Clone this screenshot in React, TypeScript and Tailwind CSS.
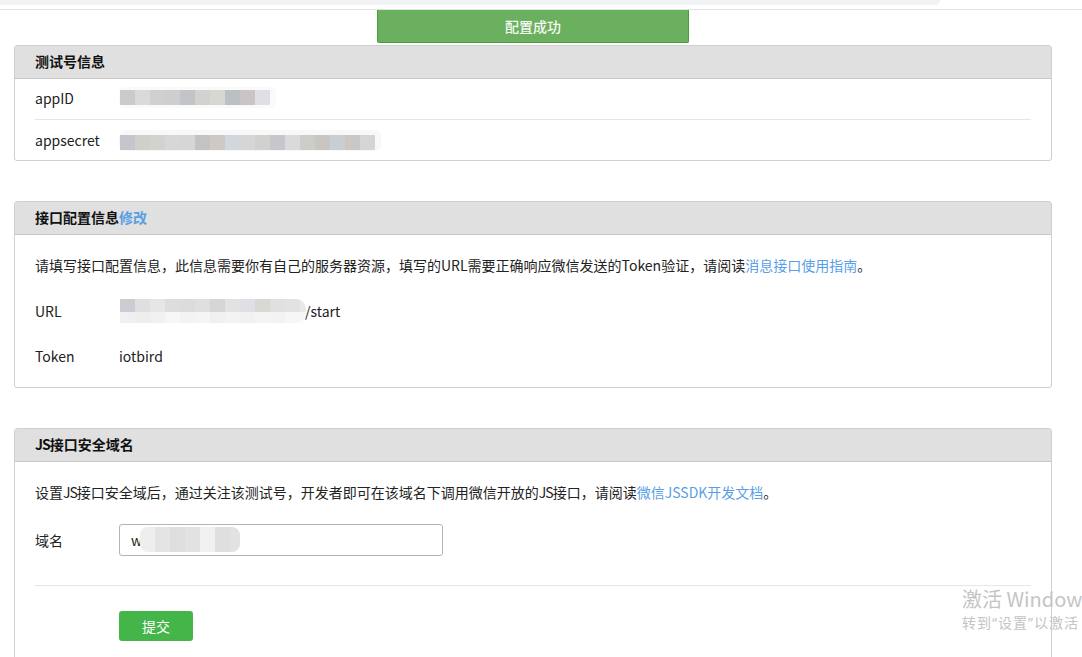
const appIdCells = ["#cbcbcb", "#dadada", "#cfd1d1", "#cfcdcd", "#c1c5c8", "#d2d2cf", "#d7d8d2", "#bcc0c3", "#c9c5c4", "#e0e0e4"];
const secretCells = ["#c5c6cb", "#d0cfca", "#d3d2d0", "#d7d7d7", "#d6d6d6", "#c4c2c2", "#cdc9c5", "#d3d6dc", "#d6d6d6", "#d0d2cd", "#c8c6cc", "#dadada", "#cbcdc6", "#c9c5c2", "#c8ced1", "#cac7c5", "#d5d5d5"];
const urlTop = ["#cdcbd1", "#dfdfdf", "#e6e6e6", "#dedddd", "#dcdcdc", "#dfdfdf", "#d8d6d4", "#e2e2e4", "#dfe0e6", "#dad8d4", "#e0e0e0", "#e2e2e2", "#e8e8e8"];
const urlBottom = ["#f0f0f0", "#eeeeee", "#f1f1f1", "#f7f7f7", "#f3f3f3", "#f5f5f5", "#f0f0f0", "#f3f3f3", "#f1f1f1", "#f4f4f4", "#f3f3f3", "#f6f6f6", "#f6f6f6"];
const domainCells = ["#eeeeee", "#e4e4e4", "#dedede", "#e4e2e0", "#f0f0f0", "#dfdfdf", "#e2e2e2"];

function Cells({ colors, height }: { colors: string[]; height: number }) {
  return (
    <div className="flex">
      {colors.map((c, i) => (
        <div key={i} className="w-[15px] shrink-0" style={{ backgroundColor: c, height }} />
      ))}
    </div>
  );
}

function Panel({ title, children }: { title: React.ReactNode; children: React.ReactNode }) {
  return (
    <section className="rounded-[3px] border border-[#d0d0d0] bg-white">
      <h3 className="flex h-[33px] items-center border-b border-[#c8c8c8] bg-[#e0e0e0] px-5 pb-[2px] text-sm font-bold text-[#111111]">
        {title}
      </h3>
      {children}
    </section>
  );
}

function Field({ label, children }: { label: string; children: React.ReactNode }) {
  return (
    <div className="flex items-center">
      <div className="w-[84px] shrink-0">{label}</div>
      {children}
    </div>
  );
}

export default function App() {
  return (
    <div className="relative h-[657px] w-[1082px] overflow-hidden bg-white font-['Noto_Sans_CJK_SC','Noto_Sans',sans-serif] text-sm text-[#222222]">
      <div className="h-[10px] border-b border-[#e2e2e2]">
        <div className="h-[5px] w-[940px] rounded-br-lg bg-[#f1f2f4]" />
      </div>

      <div className="ml-[14px] w-[1038px]">
        <div className="mx-auto flex h-[33px] w-[312px] items-center justify-center rounded-b-[2px] border-x border-b border-[#4d9a41] bg-[#6bb05f] text-sm font-medium text-[#f4f9f2]">
          配置成功
        </div>

        <div className="mt-[2px]">
          <Panel title="测试号信息">
            <div className="px-5">
              <div className="flex h-[41px] items-center border-b border-[#e6e6e6] pb-[3px]">
                <Field label="appID">
                  <div className="mt-[-1px] rounded-[6px] bg-[#fafafa] py-[3px] pr-[6px]">
                    <div className="ml-px">
                      <Cells colors={appIdCells} height={15} />
                    </div>
                  </div>
                </Field>
              </div>
              <div className="flex h-10 items-center">
                <Field label="appsecret">
                  <div className="rounded-[6px] bg-[#f8f8f8] py-[1px] pr-[6px]">
                    <div className="ml-px mt-[4px]">
                      <Cells colors={secretCells} height={15} />
                    </div>
                  </div>
                </Field>
              </div>
            </div>
          </Panel>
        </div>

        <div className="mt-10">
          <Panel
            title={
              <>
                接口配置信息<a className="text-[#5a9fe6]">修改</a>
              </>
            }
          >
            <div className="flex flex-col gap-6 px-5 pt-5 pb-[21px]">
              <p className="h-5 leading-5">
                请填写接口配置信息，此信息需要你有自己的服务器资源，填写的URL需要正确响应微信发送的Token验证，请阅读
                <a className="text-[#5a9fe6]">消息接口使用指南</a>。
              </p>
              <Field label="URL">
                <div className="ml-px w-[186px] overflow-hidden rounded-r-[10px]">
                  <Cells colors={urlTop} height={13} />
                  <Cells colors={urlBottom} height={11} />
                </div>
                <span className="ml-[-1px]">/start</span>
              </Field>
              <div className="mt-[-1px]">
                <Field label="Token">
                  <span>iotbird</span>
                </Field>
              </div>
            </div>
          </Panel>
        </div>

        <div className="mt-10">
          <Panel
            title={
              <>
                <span className="tracking-[-1px]">JS</span>接口安全域名
              </>
            }
          >
            <div className="px-5 pt-5 pb-10">
              <p className="h-5 leading-5">
                设置<span className="tracking-[-1px]">JS</span>接口安全域后，通过关注该测试号，开发者即可在该域名下调用微信开放的
                <span className="tracking-[-1px]">JS</span>接口，请阅读
                <a className="text-[#5a9fe6]">微信JSSDK开发文档</a>。
              </p>
              <div className="mt-[22px]">
                <Field label="域名">
                  <div className="relative">
                    <input
                      readOnly
                      value="w"
                      className="h-[32px] w-[324px] rounded-[3px] border border-[#b4b4b4] px-[11px] text-sm text-[#222222] outline-none"
                    />
                    <div className="absolute top-[3px] left-[21px] w-[100px] overflow-hidden rounded-[8px]">
                      <Cells colors={domainCells} height={25} />
                    </div>
                  </div>
                </Field>
              </div>
              <div className="mt-[29px] border-t border-[#e6e6e6] pt-[25px] pl-[84px]">
                <button className="h-[30px] w-[74px] rounded-[3px] bg-[#44b549] text-sm text-white">提交</button>
              </div>
            </div>
          </Panel>
        </div>
      </div>

      <div className="absolute top-[586px] left-[962px] whitespace-nowrap text-[#c4c4c4]">
        <div className="text-[20px] leading-[26px]">激活 Windows</div>
        <div className="font-['Noto_Sans','Noto_Sans_CJK_SC',sans-serif] text-sm leading-[21px] tracking-[1px]">转到“设置”以激活</div>
      </div>
    </div>
  );
}
